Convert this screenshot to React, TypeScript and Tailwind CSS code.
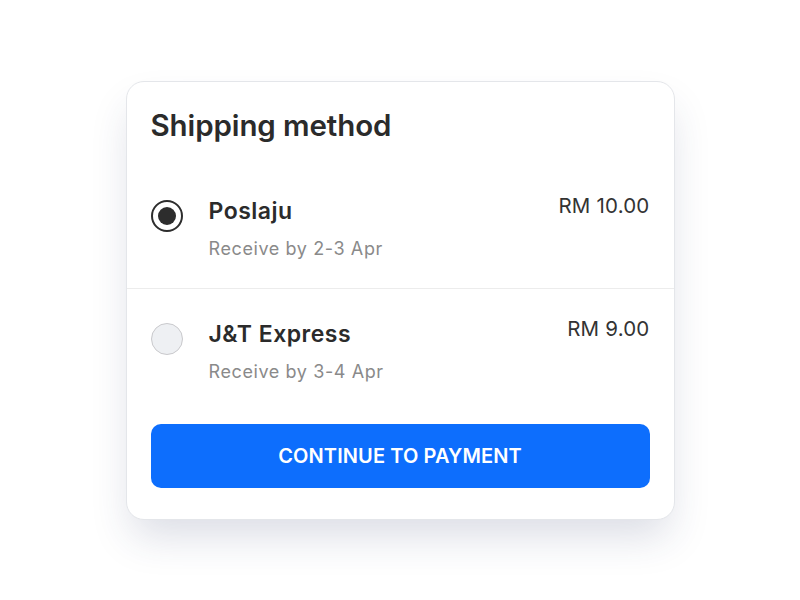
import { useState } from 'react';

const OPTIONS = [
  { id: 'poslaju', name: 'Poslaju', eta: 'Receive by 2-3 Apr', price: 'RM 10.00' },
  { id: 'jnt', name: 'J&T Express', eta: 'Receive by 3-4 Apr', price: 'RM 9.00' },
];

export default function App() {
  const [selected, setSelected] = useState('poslaju');

  return (
    <div
      className="min-h-screen w-full flex items-center justify-center bg-white"
      style={{ fontFamily: 'Inter, "Noto Sans", sans-serif' }}
    >
      <div className="w-[549px] bg-white border border-[#e4e6ea] rounded-[18px] shadow-[0_22px_40px_-6px_rgba(40,55,100,0.17)] px-[24px] pt-[26px] pb-[31px]">
        <h1 className="text-[29.5px] leading-[34px] font-semibold text-[#2b2b2b] tracking-[-0.1px]">
          Shipping method
        </h1>

        <div className="-mx-[24px]">
          {OPTIONS.map((opt, i) => {
            const isSelected = opt.id === selected;
            return (
              <div
                key={opt.id}
                onClick={() => setSelected(opt.id)}
                className={`flex items-start px-[24px] cursor-pointer ${
                  i === 0 ? 'pt-[55px] pb-[27px] border-b border-[#ececec]' : 'pt-[31px]'
                }`}
              >
                {isSelected ? (
                  <div className="mt-[3px] w-[32px] h-[32px] rounded-full border-2 border-[#2d2d2d] flex items-center justify-center shrink-0">
                    <div className="w-[18px] h-[18px] rounded-full bg-[#2d2d2d]" />
                  </div>
                ) : (
                  <div className="mt-[3px] w-[32px] h-[32px] rounded-full border-[1.5px] border-[#c9c9cc] bg-[#eef0f3] shrink-0" />
                )}
                <div className="ml-[26px] flex-1">
                  <div className="text-[23px] leading-[28px] font-semibold text-[#2b2b2b] tracking-[0.5px]">{opt.name}</div>
                  <div className="mt-[12px] text-[18px] leading-[24px] text-[#8a8a8a] tracking-[0.6px]">{opt.eta}</div>
                </div>
                <div className="text-[20.5px] leading-[24px] text-[#333333] mt-[-3px] tracking-[0.2px]">{opt.price}</div>
              </div>
            );
          })}
        </div>

        <button className="mt-[40px] w-full h-[64px] rounded-[10px] bg-[#0d6efd] text-white text-[20px] font-semibold tracking-[0.1px]">
          CONTINUE TO PAYMENT
        </button>
      </div>
    </div>
  );
}
